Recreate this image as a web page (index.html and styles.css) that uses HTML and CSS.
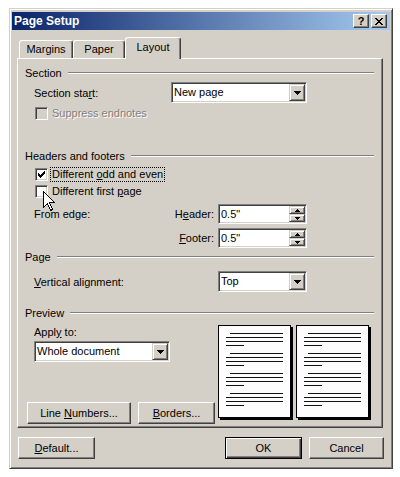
FILE: index.html
```html
<!DOCTYPE html>
<html>
<head>
<meta charset="utf-8">
<title>Page Setup</title>
<link rel="stylesheet" href="styles.css">
</head>
<body>
<div class="window">
  <div class="titlebar">
    <span class="title">Page Setup</span>
    <div class="tbtns">
      <span class="tbtn q">?</span>
      <span class="tbtn"><svg width="8" height="7" viewBox="0 0 8 7" shape-rendering="crispEdges"><path d="M0 0h2v1H0zM6 0h2v1H6zM1 1h2v1H1zM5 1h2v1H5zM2 2h4v1H2zM3 3h2v1H3zM2 4h4v1H2zM1 5h2v1H1zM5 5h2v1H5zM0 6h2v1H0zM6 6h2v1H6z"/></svg></span>
    </div>
  </div>

  <div class="tabs">
    <div class="tab t-margins">Margins</div>
    <div class="tab t-paper">Paper</div>
    <div class="tab t-layout sel">Layout</div>
  </div>

  <div class="panel">
    <div class="group g-section"><span>Section</span><i class="etch"></i></div>
    <div class="row r-start">
      <span class="lbl w-start">Section sta<u>r</u>t:</span>
      <div class="combo w-wide"><span class="val">New page</span><span class="drop"><svg width="7" height="4" viewBox="0 0 7 4" shape-rendering="crispEdges"><path d="M0 0h7v1H0zM1 1h5v1H1zM2 2h3v1H2zM3 3h1v1H3z"/></svg></span></div>
    </div>
    <div class="row chk-row r-supp">
      <span class="cb dis"></span>
      <span class="lab dis-text">Suppress endnotes</span>
    </div>

    <div class="group g-hf"><span>Headers and footers</span><i class="etch"></i></div>
    <div class="row chk-row r-odd">
      <span class="cb"><svg width="7" height="7" viewBox="0 0 7 7" shape-rendering="crispEdges"><path d="M6 0h1v1H6zM5 1h2v1H5zM0 2h1v1H0zM4 2h3v1H4zM0 3h2v1H0zM3 3h3v1H3zM0 4h5v1H0zM1 5h3v1H1zM2 6h1v1H2z"/></svg></span>
      <span class="lab focus">Different <u>o</u>dd and even</span>
    </div>
    <div class="row chk-row r-first">
      <span class="cb"></span>
      <span class="lab">Different first <u>p</u>age</span>
    </div>
    <div class="row r-head">
      <span class="lbl w-from">From edge:</span>
      <span class="lbl w-hf">H<span class="ul">e</span>ader:</span>
      <div class="spin"><span class="val">0.5"</span><span class="sbtns"><span class="sb"><svg width="5" height="3" viewBox="0 0 5 3" shape-rendering="crispEdges"><path d="M2 0h1v1H2zM1 1h3v1H1zM0 2h5v1H0z"/></svg></span><span class="sb"><svg width="5" height="3" viewBox="0 0 5 3" shape-rendering="crispEdges"><path d="M0 0h5v1H0zM1 1h3v1H1zM2 2h1v1H2z"/></svg></span></span></div>
    </div>
    <div class="row r-foot">
      <span class="lbl w-from"></span>
      <span class="lbl w-hf"><u>F</u>ooter:</span>
      <div class="spin"><span class="val">0.5"</span><span class="sbtns"><span class="sb"><svg width="5" height="3" viewBox="0 0 5 3" shape-rendering="crispEdges"><path d="M2 0h1v1H2zM1 1h3v1H1zM0 2h5v1H0z"/></svg></span><span class="sb"><svg width="5" height="3" viewBox="0 0 5 3" shape-rendering="crispEdges"><path d="M0 0h5v1H0zM1 1h3v1H1zM2 2h1v1H2z"/></svg></span></span></div>
    </div>

    <div class="group g-page"><span>Page</span><i class="etch"></i></div>
    <div class="row r-valign">
      <span class="lbl w-valign"><u>V</u>ertical alignment:</span>
      <div class="combo w-narrow"><span class="val">Top</span><span class="drop"><svg width="7" height="4" viewBox="0 0 7 4" shape-rendering="crispEdges"><path d="M0 0h7v1H0zM1 1h5v1H1zM2 2h3v1H2zM3 3h1v1H3z"/></svg></span></div>
    </div>

    <div class="group g-preview"><span>Preview</span><i class="etch"></i></div>
    <div class="preview">
      <div class="pv-left">
        <span class="apply">Appl<u>y</u> to:</span>
        <div class="combo w-wide apply-combo"><span class="val">Whole document</span><span class="drop"><svg width="7" height="4" viewBox="0 0 7 4" shape-rendering="crispEdges"><path d="M0 0h7v1H0zM1 1h5v1H1zM2 2h3v1H2zM3 3h1v1H3z"/></svg></span></div>
        <div class="pv-btns">
          <div class="btn b-line"><span>Line <u>N</u>umbers...</span></div>
          <div class="btn b-borders"><span><u>B</u>orders...</span></div>
        </div>
      </div>
      <div class="pv-right">
        <div class="page"><svg width="71" height="91" viewBox="0 0 71 91" shape-rendering="crispEdges"><path d="M11 7h53v1H11zM7 11h57v1H7zM7 15h57v1H7zM7 19h18v1H7zM11 27h53v1H11zM7 31h57v1H7zM7 35h57v1H7zM7 39h18v1H7zM11 47h53v1H11zM7 51h57v1H7zM7 55h57v1H7zM7 59h18v1H7zM11 67h53v1H11zM7 71h57v1H7zM7 75h57v1H7zM7 79h18v1H7z"/></svg></div>
        <div class="page"><svg width="71" height="91" viewBox="0 0 71 91" shape-rendering="crispEdges"><path d="M11 7h53v1H11zM7 11h57v1H7zM7 15h57v1H7zM7 19h18v1H7zM11 27h53v1H11zM7 31h57v1H7zM7 35h57v1H7zM7 39h18v1H7zM11 47h53v1H11zM7 51h57v1H7zM7 55h57v1H7zM7 59h18v1H7zM11 67h53v1H11zM7 71h57v1H7zM7 75h57v1H7zM7 79h18v1H7z"/></svg></div>
      </div>
    </div>
  </div>

  <div class="bottom">
    <div class="btn b-default"><span><u>D</u>efault...</span></div>
    <div class="btn b-ok def"><span>OK</span></div>
    <div class="btn b-cancel"><span>Cancel</span></div>
  </div>

  <svg class="cursor" width="13" height="21" viewBox="0 0 13 21" shape-rendering="crispEdges"><path d="M0.5 0.5 L0.5 16.5 L4.5 12.5 L7.5 19.5 L9.5 18.5 L6.5 11.5 L11.5 11.5 Z" fill="#fff" stroke="#000" stroke-width="1"/></svg>
</div>
</body>
</html>
```

FILE: styles.css
```css
body {
  margin: 0;
  background: #ffffff;
  font-family: "Liberation Sans", Arial, sans-serif;
  font-size: 11px;
  color: #000;
}

.window {
  position: relative;
  width: 384px;
  height: 461px;
  margin: 8px 0 0 9px;
  box-sizing: border-box;
  background: #d4d0c8;
  border: 1px solid;
  border-color: #d4d0c8 #404040 #404040 #d4d0c8;
  box-shadow: inset 1px 1px #fff, inset -1px -1px #808080;
  padding: 3px 2px 2px 2px;
}

/* title bar */
.titlebar {
  height: 18px;
  display: flex;
  align-items: center;
  background: linear-gradient(to right, #0a246a, #a6caf0);
  padding: 0 3px 0 2px;
}
.title {
  flex: 1;
  color: #fff;
  font-weight: bold;
  font-size: 12px;
}
.tbtns {
  display: flex;
  gap: 2px;
}
.tbtn {
  width: 16px;
  height: 14px;
  box-sizing: border-box;
  background: #d4d0c8;
  border: 1px solid;
  border-color: #fff #404040 #404040 #fff;
  box-shadow: inset -1px -1px #808080;
  display: flex;
  align-items: center;
  justify-content: center;
}
.tbtn svg { display: block; }
.tbtn.q {
  font-weight: bold;
  font-size: 11px;
  line-height: 12px;
}

/* tabs */
.tabs {
  display: flex;
  align-items: flex-end;
  height: 21px;
  margin: 7px 0 0 5px;
  padding-left: 2px;
}
.tab {
  height: 18px;
  box-sizing: border-box;
  border-top: 1px solid #fff;
  border-left: 1px solid #fff;
  border-right: 1px solid #404040;
  box-shadow: inset -1px 0 #808080;
  border-radius: 3px 3px 0 0;
  text-align: center;
  line-height: 17px;
}
.t-margins { width: 54px; }
.t-paper { width: 52px; }
.t-layout { width: 56px; }
.tab.sel {
  height: 22px;
  line-height: 19px;
  margin-bottom: -1px;
  position: relative;
  z-index: 1;
  background: #d4d0c8;
}

/* panel */
.panel {
  height: 370px;
  box-sizing: border-box;
  margin: 0 7px 0 5px;
  border: 1px solid;
  border-color: #fff #404040 #404040 #fff;
  box-shadow: inset -1px -1px #808080;
  display: flex;
  flex-direction: column;
}

.group {
  display: flex;
  align-items: center;
  height: 14px;
  padding: 0 8px 0 7px;
}
.etch {
  flex: 1;
  height: 0;
  border-top: 1px solid #808080;
  border-bottom: 1px solid #fff;
  margin-left: 6px;
}
.g-section { margin-top: 7px; }
.g-hf { margin-top: 29px; }
.g-page { margin-top: 2px; }
.g-preview { margin-top: 14px; }

.row {
  display: flex;
  align-items: center;
  padding-left: 16px;
}
.chk-row { padding-left: 17px; }

.r-start { margin-top: 2px; height: 21px; }
.r-supp { margin-top: 4px; height: 13px; }
.r-odd { margin-top: 4px; height: 15px; }
.r-first { margin-top: 2px; height: 15px; }
.r-head { margin-top: 5px; height: 20px; }
.r-foot { margin-top: 4px; height: 20px; }
.r-valign { margin-top: 7px; height: 21px; }

.lbl { display: block; box-sizing: border-box; }
.w-start { width: 137px; }
.w-from { width: 130px; }
.w-hf { width: 54px; text-align: right; padding-right: 4px; }
.w-valign { width: 184px; }
.ul { text-decoration: underline; }

/* checkbox */
.cb {
  width: 13px;
  height: 13px;
  box-sizing: border-box;
  background: #fff;
  border: 1px solid;
  border-color: #808080 #fff #fff #808080;
  box-shadow: inset 1px 1px #404040, inset -1px -1px #d4d0c8;
  margin-right: 2px;
  padding: 2px;
  flex: none;
}
.cb svg { display: block; }
.cb.dis { background: #d4d0c8; }

.lab {
  border: 1px solid transparent;
  padding: 0 1px;
  line-height: 13px;
}
.lab.focus { border: 1px dotted #000; }
.dis-text {
  color: #808080;
  text-shadow: 1px 1px 0 #fff;
}

/* combo box */
.combo {
  display: flex;
  box-sizing: border-box;
  height: 21px;
  background: #fff;
  border: 1px solid;
  border-color: #808080 #fff #fff #808080;
  box-shadow: inset 1px 1px #404040, inset -1px -1px #d4d0c8;
  padding: 1px;
}
.w-wide { width: 136px; }
.w-narrow { width: 89px; }
.combo .val {
  flex: 1;
  padding-left: 1px;
  line-height: 17px;
}
.drop, .sb {
  box-sizing: border-box;
  background: #d4d0c8;
  border: 1px solid;
  border-color: #d4d0c8 #404040 #404040 #d4d0c8;
  box-shadow: inset 1px 1px #fff, inset -1px -1px #808080;
  display: flex;
  align-items: center;
  justify-content: center;
}
.drop { width: 16px; }
.drop svg, .sb svg { display: block; }

/* spinner */
.spin {
  display: flex;
  box-sizing: border-box;
  width: 89px;
  height: 20px;
  background: #fff;
  border: 1px solid;
  border-color: #808080 #fff #fff #808080;
  box-shadow: inset 1px 1px #404040, inset -1px -1px #d4d0c8;
  padding: 1px;
}
.spin .val {
  flex: 1;
  padding-left: 1px;
  line-height: 16px;
}
.sbtns {
  width: 16px;
  display: flex;
  flex-direction: column;
}
.sb { flex: 1; }

/* preview */
.preview {
  flex: 1;
  display: flex;
  padding-bottom: 3px;
}
.pv-left {
  width: 200px;
  box-sizing: border-box;
  padding-left: 9px;
  display: flex;
  flex-direction: column;
}
.apply {
  margin: 6px 0 0 7px;
  line-height: 13px;
}
.apply-combo { margin: 2px 0 0 7px; }
.pv-btns {
  margin-top: auto;
  display: flex;
  gap: 7px;
}
.pv-right {
  display: flex;
  gap: 5px;
  padding-top: 5px;
}
.page {
  width: 73px;
  height: 93px;
  box-sizing: border-box;
  border: 1px solid #000;
  background: #fdfdfd;
  box-shadow: 2px 2px 0 #000;
}
.page svg { display: block; fill: #111; }

/* buttons */
.btn {
  box-sizing: border-box;
  height: 22px;
  background: #d4d0c8;
  border: 1px solid;
  border-color: #fff #404040 #404040 #fff;
  box-shadow: inset -1px -1px #808080;
  display: flex;
  align-items: center;
  justify-content: center;
}
.btn.def {
  border-color: #000;
  box-shadow: inset 1px 1px #fff, inset -1px -1px #404040, inset -2px -2px #808080;
}
.b-line { width: 104px; }
.b-borders { width: 77px; }

.bottom {
  display: flex;
  margin-top: 9px;
}
.b-default { width: 77px; margin-left: 6px; }
.b-ok { width: 77px; margin-left: auto; }
.b-cancel { width: 75px; margin-left: 7px; margin-right: 6px; }

/* mouse pointer over the checkbox */
.cursor {
  position: absolute;
  left: 33px;
  top: 182px;
}
```
